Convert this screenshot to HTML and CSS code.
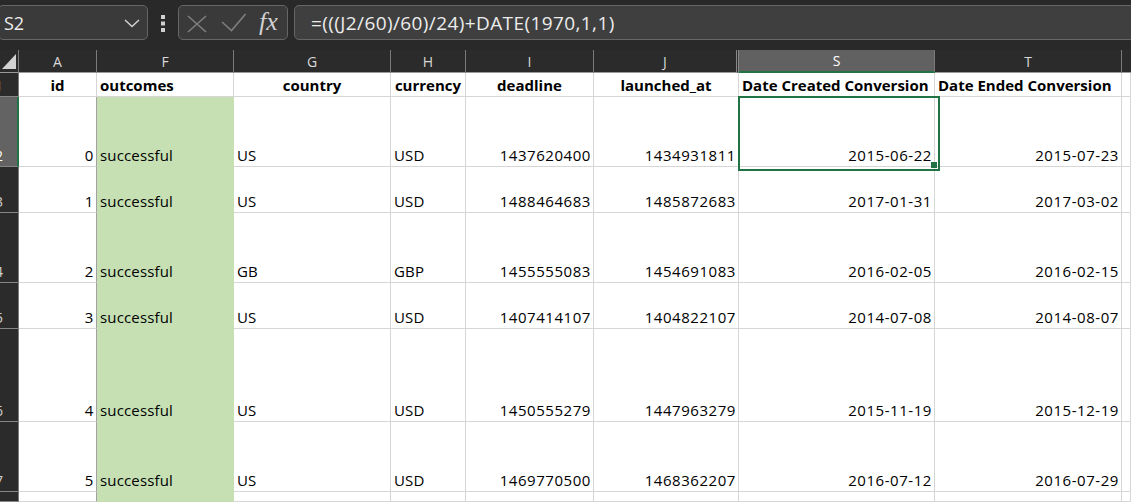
FILE: index.html
```html
<!DOCTYPE html>
<html>
<head>
<meta charset="utf-8">
<title>Sheet</title>
<link rel="stylesheet" href="styles.css">
</head>
<body>
<div class="app">
  <div class="fbar">
    <div class="namebox">
      <span class="name">S2</span>
      <svg class="chev" width="16" height="10" viewBox="0 0 16 10"><polyline points="1,2 8,8.5 15,2"/></svg>
    </div>
    <svg class="dots" width="4" height="17" viewBox="0 0 4 17"><rect x="0" y="0" width="4" height="4"/><rect x="0" y="6.5" width="4" height="4"/><rect x="0" y="13" width="4" height="4"/></svg>
    <div class="btns">
      <svg class="cancel" width="20" height="18" viewBox="0 0 20 18"><path d="M1 1 L19 17 M19 1 L1 17"/></svg>
      <svg class="enter" width="25" height="19" viewBox="0 0 25 19"><polyline points="1,9 10.5,17.5 24.5,1"/></svg>
      <span class="fx">fx</span>
    </div>
    <div class="formula">=(((J2/60)/60)/24)+DATE(1970,1,1)</div>
  </div>

  <div class="sheet">
    <div class="ch corner"><svg width="18" height="22" viewBox="0 0 18 22"><polygon points="2,19 16,19 16,4"/></svg></div>
    <div class="ch">A</div>
    <div class="ch">F</div>
    <div class="ch">G</div>
    <div class="ch">H</div>
    <div class="ch">I</div>
    <div class="ch hid">J</div>
    <div class="ch sel">S</div>
    <div class="ch">T</div>
    <div class="ch last"></div>

    <div class="rh"><span>1</span></div>
    <div class="c b m">id</div>
    <div class="c b">outcomes</div>
    <div class="c b m">country</div>
    <div class="c b m">currency</div>
    <div class="c b m">deadline</div>
    <div class="c b m">launched_at</div>
    <div class="c b">Date Created Conversion</div>
    <div class="c b">Date Ended Conversion</div>
    <div class="c"></div>

    <div class="rh sel"><span>2</span></div>
    <div class="c r af">0</div>
    <div class="c g">successful</div>
    <div class="c">US</div>
    <div class="c">USD</div>
    <div class="c r">1437620400</div>
    <div class="c r">1434931811</div>
    <div class="c r active">2015-06-22</div>
    <div class="c r">2015-07-23</div>
    <div class="c"></div>

    <div class="rh"><span>3</span></div>
    <div class="c r af">1</div>
    <div class="c g">successful</div>
    <div class="c">US</div>
    <div class="c">USD</div>
    <div class="c r">1488464683</div>
    <div class="c r">1485872683</div>
    <div class="c r">2017-01-31</div>
    <div class="c r">2017-03-02</div>
    <div class="c"></div>

    <div class="rh"><span>4</span></div>
    <div class="c r af">2</div>
    <div class="c g">successful</div>
    <div class="c">GB</div>
    <div class="c">GBP</div>
    <div class="c r">1455555083</div>
    <div class="c r">1454691083</div>
    <div class="c r">2016-02-05</div>
    <div class="c r">2016-02-15</div>
    <div class="c"></div>

    <div class="rh"><span>5</span></div>
    <div class="c r af">3</div>
    <div class="c g">successful</div>
    <div class="c">US</div>
    <div class="c">USD</div>
    <div class="c r">1407414107</div>
    <div class="c r">1404822107</div>
    <div class="c r">2014-07-08</div>
    <div class="c r">2014-08-07</div>
    <div class="c"></div>

    <div class="rh"><span>6</span></div>
    <div class="c r af">4</div>
    <div class="c g">successful</div>
    <div class="c">US</div>
    <div class="c">USD</div>
    <div class="c r">1450555279</div>
    <div class="c r">1447963279</div>
    <div class="c r">2015-11-19</div>
    <div class="c r">2015-12-19</div>
    <div class="c"></div>

    <div class="rh"><span>7</span></div>
    <div class="c r af">5</div>
    <div class="c g">successful</div>
    <div class="c">US</div>
    <div class="c">USD</div>
    <div class="c r">1469770500</div>
    <div class="c r">1468362207</div>
    <div class="c r">2016-07-12</div>
    <div class="c r">2016-07-29</div>
    <div class="c"></div>

    <div class="rh"></div>
    <div class="c af"></div>
    <div class="c g"></div>
    <div class="c"></div>
    <div class="c"></div>
    <div class="c"></div>
    <div class="c"></div>
    <div class="c"></div>
    <div class="c"></div>
    <div class="c"></div>
  </div>
</div>
</body>
</html>
```

FILE: styles.css
```css
* { box-sizing: border-box; }
html, body { margin: 0; padding: 0; }
body {
  width: 1131px;
  height: 502px;
  overflow: hidden;
  background: #292929;
  font-family: "Open Sans", "Noto Sans", sans-serif;
}
.app {
  display: flex;
  flex-direction: column;
  height: 502px;
}

/* formula bar */
.fbar {
  flex: none;
  height: 50px;
  display: flex;
  align-items: flex-start;
  padding-top: 5px;
}
.namebox {
  margin-left: -2px;
  width: 150px;
  height: 35px;
  border: 1px solid #666;
  border-radius: 5px;
  background: #3a3a3a;
  display: flex;
  align-items: center;
  padding-left: 5px;
  padding-right: 7px;
}
.name {
  color: #ececec;
  font-size: 18px;
}
.chev { margin-left: auto; }
.chev polyline { fill: none; stroke: #d2d2d2; stroke-width: 1.5; }
.dots {
  margin-left: 13px;
  margin-top: 10px;
  fill: #cfcfcf;
}
.btns {
  margin-left: 13px;
  width: 110px;
  height: 35px;
  border: 1px solid #666;
  border-radius: 5px;
  background: #3a3a3a;
  display: flex;
  align-items: center;
  padding-left: 8px;
}
.cancel path, .enter polyline {
  fill: none;
  stroke: #7e7e7e;
  stroke-width: 1.6;
}
.cancel { margin-top: 2px; }
.enter { margin-left: 14px; }
.fx {
  margin-left: 13px;
  font-family: "Liberation Serif", "DejaVu Serif", serif;
  font-style: italic;
  font-size: 26px;
  line-height: 26px;
  color: #d0d0d0;
  margin-top: -2px;
}
.formula {
  flex: 1;
  margin-left: 6px;
  margin-right: -10px;
  height: 35px;
  border: 1px solid #666;
  border-radius: 5px;
  background: #3f3f3f;
  color: #ececec;
  font-size: 19px;
  letter-spacing: 0.4px;
  padding-left: 16px;
  display: flex;
  align-items: center;
  white-space: nowrap;
}

/* sheet grid */
.sheet {
  flex: 1;
  display: grid;
  grid-template-columns: 19px 78px 137px 157px 75px 128px 145px 196px 187px 1fr;
  grid-template-rows: 23px 24px 70px 46px 70px 46px 93px 70px 1fr;
  background: #fff;
  font-size: 15px;
}
.ch {
  background: #2b2b2b;
  color: #d8d8d8;
  font-size: 14px;
  display: flex;
  align-items: center;
  justify-content: center;
  border-right: 1px solid #7a7a7a;
  border-bottom: 1px solid #9a9a9a;
}
.ch.corner {
  align-items: flex-start;
  justify-content: flex-start;
  fill: #d2d2d2;
}
.ch.hid { border-right: 3px double #8a8a8a; }
.ch.sel {
  background: #616161;
  color: #fff;
  border-bottom: 2px solid #217346;
}
.ch.last { border-right: none; }

.rh {
  background: #2b2b2b;
  color: #d0d0d0;
  font-size: 14px;
  line-height: 20px;
  display: flex;
  align-items: flex-end;
  overflow: hidden;
  border-right: 1px solid #7a7a7a;
  border-bottom: 1px solid #858585;
}
.rh span { margin-left: -5px; }
.rh.sel {
  background: #636363;
  color: #fff;
  border-right: 2px solid #217346;
}

.c {
  background: #fff;
  color: #000;
  display: flex;
  align-items: flex-end;
  padding: 0 3px 1px;
  line-height: 20px;
  white-space: nowrap;
  overflow: hidden;
  letter-spacing: 0.15px;
  border-right: 1px solid #d6d6d6;
  border-bottom: 1px solid #d6d6d6;
}
.c.r { justify-content: flex-end; letter-spacing: 0.55px; padding-right: 2px; }
.c.m { justify-content: center; }
.c.b { font-weight: 700; letter-spacing: 0; }
.c.af { border-right-color: #a2a2a2; }
.c.g {
  background: #c6e0b4;
  border-right-color: #c6e0b4;
  border-bottom-color: #c6e0b4;
}
.c.active {
  position: relative;
  overflow: visible;
}
.c.active::after {
  content: "";
  position: absolute;
  left: -1px;
  top: -1px;
  width: 198px;
  height: 71px;
  border: 2px solid #217346;
  pointer-events: none;
}
.c.active::before {
  content: "";
  position: absolute;
  left: 192px;
  top: 65px;
  width: 6px;
  height: 6px;
  background: #217346;
  z-index: 1;
}
```
